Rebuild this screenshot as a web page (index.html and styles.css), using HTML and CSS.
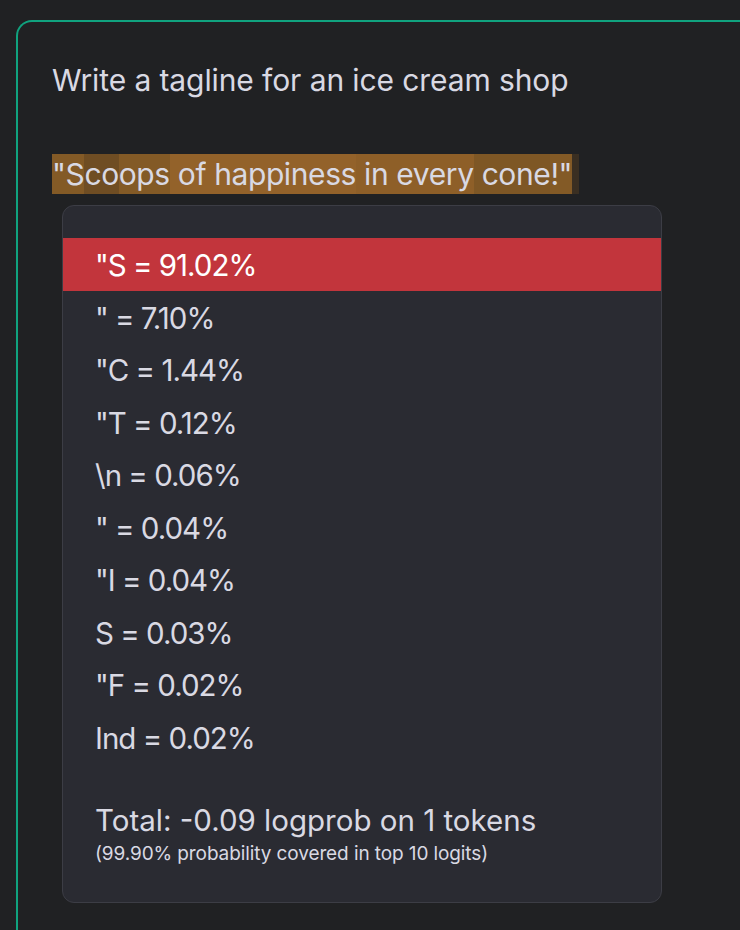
FILE: index.html
```html
<!DOCTYPE html>
<html>
<head>
<meta charset="utf-8">
<link rel="stylesheet" href="styles.css">
</head>
<body>
<div class="page">
  <div class="panel">
    <p class="prompt">Write a tagline for an ice cream shop</p>
    <div class="completion"><span class="tok t1">"S</span><span class="tok t2">co</span><span class="tok t1">ops</span><span class="tok t3"> of</span><span class="tok t3"> happiness</span><span class="tok t4"> in every</span><span class="tok t5"> cone</span><span class="tok t1">!"</span><span class="tok t6"> </span></div>
    <div class="popup">
      <ul class="probs">
        <li class="prob active">"S = 91.02%</li>
        <li class="prob">" = 7.10%</li>
        <li class="prob">"C = 1.44%</li>
        <li class="prob">"T = 0.12%</li>
        <li class="prob">\n = 0.06%</li>
        <li class="prob">" = 0.04%</li>
        <li class="prob">"I = 0.04%</li>
        <li class="prob">S = 0.03%</li>
        <li class="prob">"F = 0.02%</li>
        <li class="prob">Ind = 0.02%</li>
      </ul>
      <div class="total">Total: -0.09 logprob on 1 tokens</div>
      <div class="covered">(99.90% probability covered in top 10 logits)</div>
    </div>
  </div>
</div>
</body>
</html>
```

FILE: styles.css
```css
html, body {
  margin: 0;
  padding: 0;
  background: #202123;
  height: 100%;
  overflow: hidden;
}
body {
  font-family: Inter, "Noto Sans", "Liberation Sans", sans-serif;
  color: #d9d9e3;
}
.page {
  padding: 20px 0 0 16px;
}
.panel {
  border-top: 2px solid #10a37f;
  border-left: 2px solid #10a37f;
  border-top-left-radius: 16px;
  padding: 38px 0 0 34px;
  height: 930px;
  box-sizing: border-box;
}
.prompt {
  margin: 0;
  font-size: 30px;
  line-height: 40px;
  letter-spacing: -0.1px;
}
.completion {
  margin-top: 54px;
  font-size: 30px;
  letter-spacing: -0.4px;
  display: flex;
  height: 40px;
  white-space: pre;
}
.tok {
  display: inline-block;
  line-height: 40px;
  height: 40px;
}
.t1 { background: #835a26; }
.t2 { background: #6f4d23; }
.t3 { background: #93622a; }
.t4 { background: #8e5f28; }
.t5 { background: #7e5725; }
.t6 { background: #3a2f22; width: 7px; }
.popup {
  margin: 11px 0 0 10px;
  width: 600px;
  background: #2a2b32;
  border: 1px solid #3c3d45;
  border-radius: 12px;
  padding: 32px 0 0 0;
  box-sizing: border-box;
  height: 698px;
}
.probs {
  list-style: none;
  margin: 0;
  padding: 0;
}
.prob {
  height: 52.5px;
  line-height: 54px;
  padding-left: 32px;
  font-size: 29.5px;
  letter-spacing: -1px;
}
.prob.active {
  background: #c2353c;
  color: #ffffff;
}
.total {
  margin-top: 39px;
  padding-left: 32px;
  font-size: 29.5px;
  line-height: 36px;
  letter-spacing: 0;
}
.covered {
  margin-top: 3px;
  padding-left: 32px;
  font-size: 19px;
  line-height: 26px;
  letter-spacing: -0.1px;
}
```
